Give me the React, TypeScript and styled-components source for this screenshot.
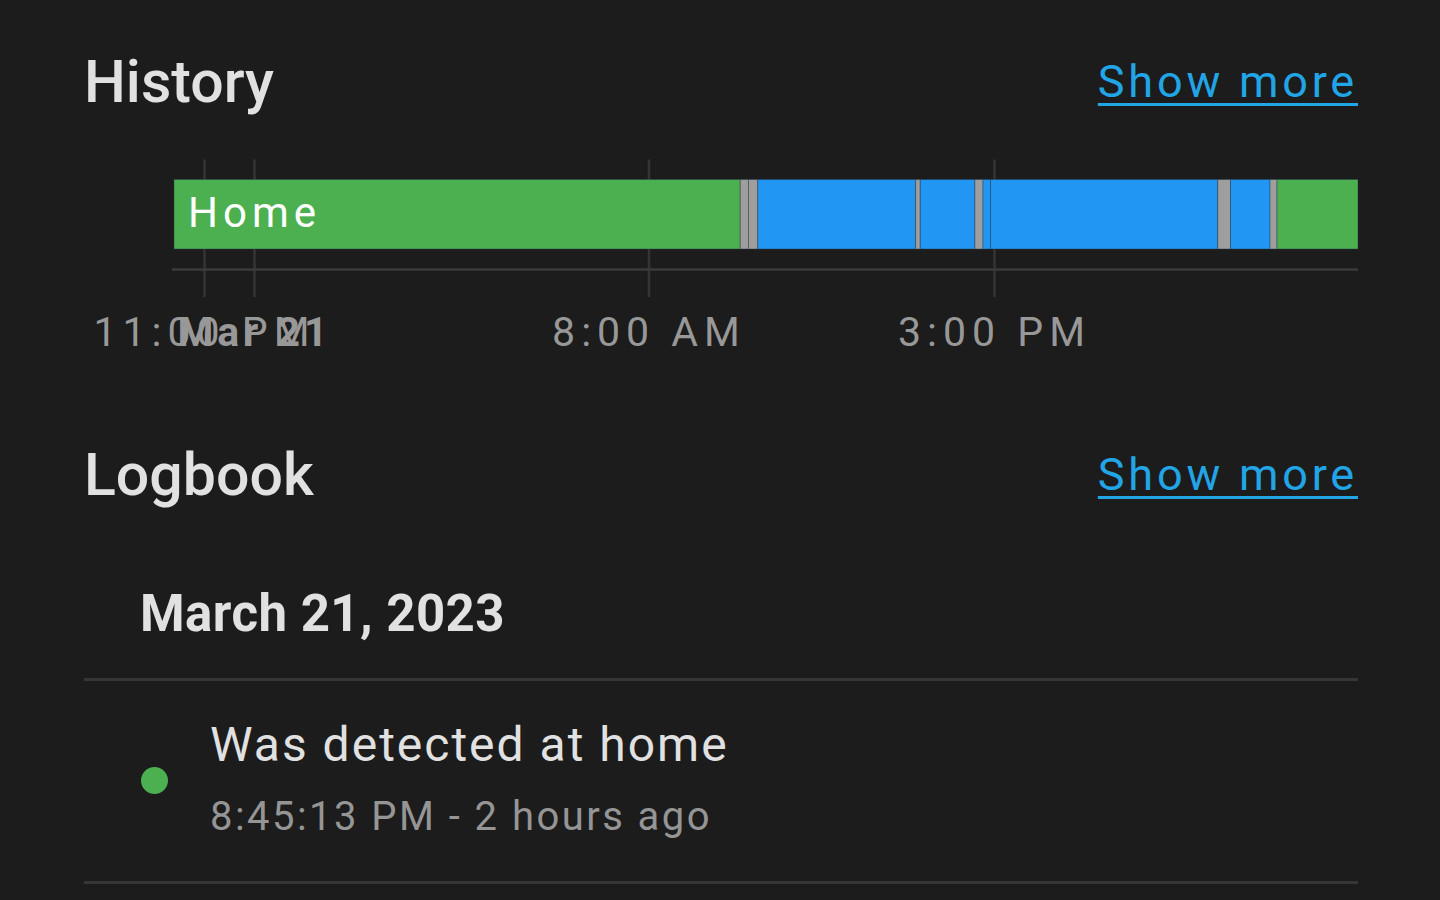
import React from "react";
import styled, { createGlobalStyle } from "styled-components";

const GlobalStyle = createGlobalStyle`
  html, body {
    margin: 0;
    padding: 0;
    background: #1c1c1c;
  }
  body {
    font-family: Roboto, "Noto Sans", "Liberation Sans", sans-serif;
    -webkit-font-smoothing: antialiased;
  }
`;

const Page = styled.main`
  width: 1440px;
  height: 900px;
  overflow: hidden;
  box-sizing: border-box;
  padding: 0 82px 0 84px;
  background: #1c1c1c;
  display: flex;
  flex-direction: column;
`;

const SectionHeader = styled.div<{ $top: number }>`
  display: flex;
  align-items: center;
  justify-content: space-between;
  margin-top: ${(p) => p.$top}px;
`;

const Title = styled.h2`
  margin: 0;
  font-size: 59px;
  line-height: 1;
  font-weight: 500;
  color: #e1e1e1;
`;

const ShowMore = styled.a`
  font-size: 45px;
  line-height: 1;
  font-weight: 400;
  letter-spacing: 3.8px;
  color: #22a5e6;
  text-decoration: underline;
  text-decoration-thickness: 3px;
  text-underline-offset: 6px;
  cursor: pointer;
`;

const ChartSvg = styled.svg`
  display: block;
  margin-top: 39px;
  font-family: Roboto, "Noto Sans", sans-serif;
`;

const DateHeading = styled.div`
  margin-top: 84px;
  padding-left: 56px;
  font-size: 51px;
  line-height: 1;
  font-weight: 700;
  letter-spacing: 0.45px;
  color: #e1e1e1;
`;

const Divider = styled.div<{ $top: number }>`
  height: 3px;
  background: #363636;
  margin-top: ${(p) => p.$top}px;
`;

const Entry = styled.div`
  display: flex;
  align-items: center;
  padding: 40px 0 44px 57px;
`;

const Dot = styled.span<{ $color: string }>`
  width: 27px;
  height: 27px;
  border-radius: 50%;
  background: ${(p) => p.$color};
  flex: none;
  margin-top: 3px;
`;

const EntryText = styled.div`
  display: flex;
  flex-direction: column;
  margin-left: 42px;
`;

const EntryTitle = styled.div`
  font-size: 48px;
  line-height: 1;
  letter-spacing: 2px;
  color: #e1e1e1;
`;

const EntrySub = styled.div`
  margin-top: 28px;
  font-size: 40px;
  line-height: 1;
  letter-spacing: 2.45px;
  color: #959595;
`;

type Seg = { from: number; to: number; color: string };

const GREEN = "#4caf50";
const BLUE = "#2196f3";
const GRAY = "#9e9e9e";

const segments: Seg[] = [
  { from: 90, to: 656.2, color: GREEN },
  { from: 656.2, to: 664.4, color: GRAY },
  { from: 664.4, to: 673.8, color: GRAY },
  { from: 673.8, to: 831.7, color: BLUE },
  { from: 831.7, to: 836.2, color: GRAY },
  { from: 836.2, to: 890.9, color: BLUE },
  { from: 890.9, to: 899, color: GRAY },
  { from: 899, to: 906.4, color: BLUE },
  { from: 906.4, to: 1133.8, color: BLUE },
  { from: 1133.8, to: 1146.4, color: GRAY },
  { from: 1146.4, to: 1186, color: BLUE },
  { from: 1186, to: 1193, color: GRAY },
  { from: 1193, to: 1274, color: GREEN },
];

const ticks = [120.5, 170.5, 565, 910.5];

const labels = [
  { x: 120.5, text: "11:00 PM", bold: false },
  { x: 170.5, text: "Mar 21", bold: true },
  { x: 565, text: "8:00 AM", bold: false },
  { x: 910.5, text: "3:00 PM", bold: false },
];

function Timeline() {
  return (
    <ChartSvg width={1274} height={215} viewBox="0 0 1274 215">
      {ticks.map((x) => (
        <line key={x} x1={x} x2={x} y1={9.5} y2={147} stroke="#343434" strokeWidth={2.6} />
      ))}
      <line x1={88} x2={1274} y1={119.5} y2={119.5} stroke="#3a3a3a" strokeWidth={2.6} />
      {segments.map((s, i) => (
        <rect
          key={i}
          x={s.from}
          y={29.5}
          width={s.to - s.from}
          height={69.5}
          fill={s.color}
          stroke="rgba(40,60,80,0.55)"
          strokeWidth={0.8}
        />
      ))}
      <text x={104} y={76.5} fontSize={42} letterSpacing={5} fill="#ffffff">
        Home
      </text>
      {labels.map((l) => (
        <text
          key={l.text}
          x={l.x}
          y={195.5}
          fontSize={41}
          fontWeight={l.bold ? 700 : 400}
          letterSpacing={l.bold ? 4 : 6}
          textAnchor="middle"
          fill="#989898"
        >
          {l.text}
        </text>
      ))}
    </ChartSvg>
  );
}

export default function App() {
  return (
    <>
      <GlobalStyle />
      <Page>
        <SectionHeader $top={52}>
          <Title>History</Title>
          <ShowMore>Show more</ShowMore>
        </SectionHeader>
        <Timeline />
        <SectionHeader $top={80}>
          <Title>Logbook</Title>
          <ShowMore>Show more</ShowMore>
        </SectionHeader>
        <DateHeading>March 21, 2023</DateHeading>
        <Divider $top={39} />
        <Entry>
          <Dot $color={GREEN} />
          <EntryText>
            <EntryTitle>Was detected at home</EntryTitle>
            <EntrySub>8:45:13 PM - 2 hours ago</EntrySub>
          </EntryText>
        </Entry>
        <Divider $top={0} />
      </Page>
    </>
  );
}
